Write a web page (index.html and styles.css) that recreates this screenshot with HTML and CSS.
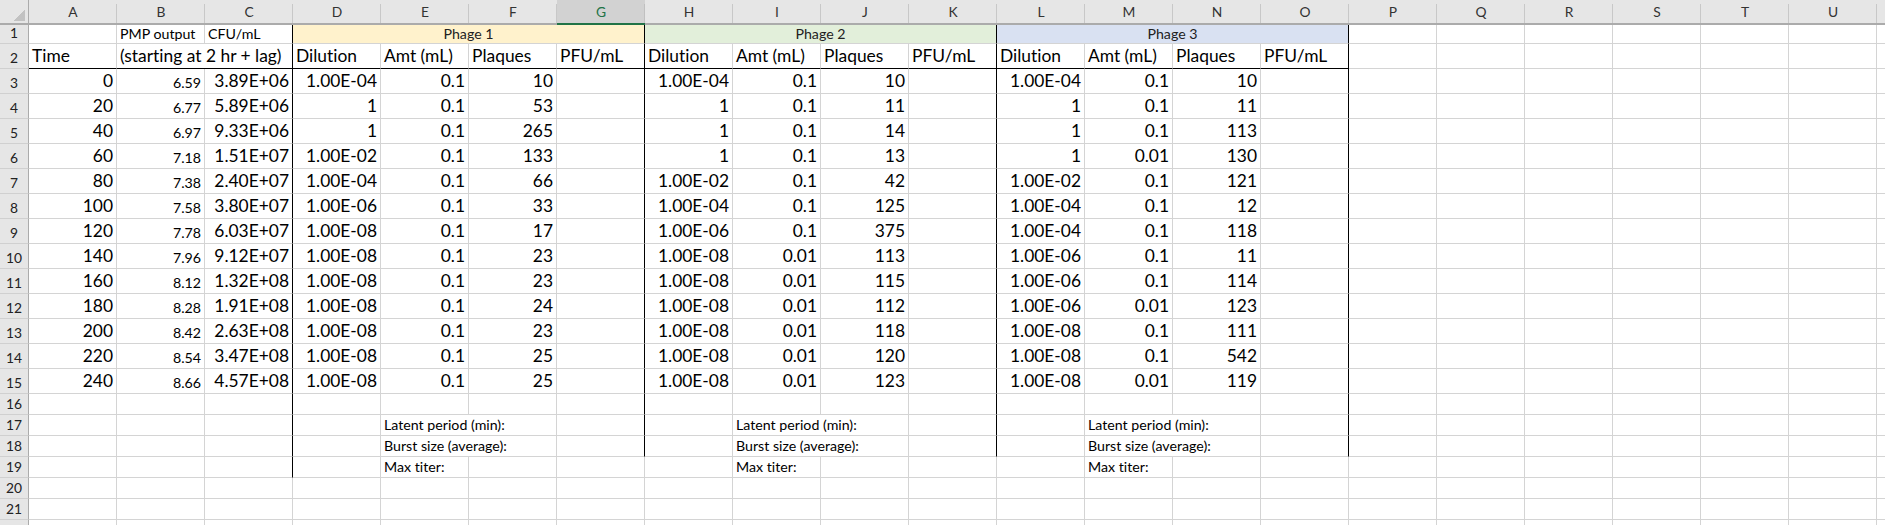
FILE: index.html
```html
<!DOCTYPE html>
<html>
<head>
<meta charset="utf-8">
<title>Phage growth</title>
<link rel="stylesheet" href="styles.css">
</head>
<body>
<table class="sheet">
<colgroup><col class="c-rh"><col span="22" class="c"></colgroup>
<thead>
<tr class="colhead"><th class="corner"></th><th>A</th><th>B</th><th>C</th><th>D</th><th>E</th><th>F</th><th class="sel">G</th><th>H</th><th>I</th><th>J</th><th>K</th><th>L</th><th>M</th><th>N</th><th>O</th><th>P</th><th>Q</th><th>R</th><th>S</th><th>T</th><th>U</th><th></th></tr>
</thead>
<tbody>
<tr class="r19"><th>1</th><td></td><td class="t s">PMP output</td><td class="t s k">CFU/mL</td><td colspan="4" class="phage p1 k">Phage 1</td><td colspan="4" class="phage p2 k">Phage 2</td><td colspan="4" class="phage p3 k">Phage 3</td><td></td><td></td><td></td><td></td><td></td><td></td><td></td></tr>
<tr class="r25 hd"><th>2</th><td class="t hb">Time</td><td colspan="2" class="t hb k">(starting at 2 hr + lag)</td><td class="t hb">Dilution</td><td class="t hb">Amt (mL)</td><td class="t hb">Plaques</td><td class="t hb k">PFU/mL</td><td class="t hb">Dilution</td><td class="t hb">Amt (mL)</td><td class="t hb">Plaques</td><td class="t hb k">PFU/mL</td><td class="t hb">Dilution</td><td class="t hb">Amt (mL)</td><td class="t hb">Plaques</td><td class="t hb k">PFU/mL</td><td></td><td></td><td></td><td></td><td></td><td></td><td></td></tr>
<tr class="r25"><th>3</th><td>0</td><td class="s">6.59</td><td class="k">3.89E+06</td><td>1.00E-04</td><td>0.1</td><td>10</td><td class="k"></td><td>1.00E-04</td><td>0.1</td><td>10</td><td class="k"></td><td>1.00E-04</td><td>0.1</td><td>10</td><td class="k"></td><td></td><td></td><td></td><td></td><td></td><td></td><td></td></tr>
<tr class="r25"><th>4</th><td>20</td><td class="s">6.77</td><td class="k">5.89E+06</td><td>1</td><td>0.1</td><td>53</td><td class="k"></td><td>1</td><td>0.1</td><td>11</td><td class="k"></td><td>1</td><td>0.1</td><td>11</td><td class="k"></td><td></td><td></td><td></td><td></td><td></td><td></td><td></td></tr>
<tr class="r25"><th>5</th><td>40</td><td class="s">6.97</td><td class="k">9.33E+06</td><td>1</td><td>0.1</td><td>265</td><td class="k"></td><td>1</td><td>0.1</td><td>14</td><td class="k"></td><td>1</td><td>0.1</td><td>113</td><td class="k"></td><td></td><td></td><td></td><td></td><td></td><td></td><td></td></tr>
<tr class="r25"><th>6</th><td>60</td><td class="s">7.18</td><td class="k">1.51E+07</td><td>1.00E-02</td><td>0.1</td><td>133</td><td class="k"></td><td>1</td><td>0.1</td><td>13</td><td class="k"></td><td>1</td><td>0.01</td><td>130</td><td class="k"></td><td></td><td></td><td></td><td></td><td></td><td></td><td></td></tr>
<tr class="r25"><th>7</th><td>80</td><td class="s">7.38</td><td class="k">2.40E+07</td><td>1.00E-04</td><td>0.1</td><td>66</td><td class="k"></td><td>1.00E-02</td><td>0.1</td><td>42</td><td class="k"></td><td>1.00E-02</td><td>0.1</td><td>121</td><td class="k"></td><td></td><td></td><td></td><td></td><td></td><td></td><td></td></tr>
<tr class="r25"><th>8</th><td>100</td><td class="s">7.58</td><td class="k">3.80E+07</td><td>1.00E-06</td><td>0.1</td><td>33</td><td class="k"></td><td>1.00E-04</td><td>0.1</td><td>125</td><td class="k"></td><td>1.00E-04</td><td>0.1</td><td>12</td><td class="k"></td><td></td><td></td><td></td><td></td><td></td><td></td><td></td></tr>
<tr class="r25"><th>9</th><td>120</td><td class="s">7.78</td><td class="k">6.03E+07</td><td>1.00E-08</td><td>0.1</td><td>17</td><td class="k"></td><td>1.00E-06</td><td>0.1</td><td>375</td><td class="k"></td><td>1.00E-04</td><td>0.1</td><td>118</td><td class="k"></td><td></td><td></td><td></td><td></td><td></td><td></td><td></td></tr>
<tr class="r25"><th>10</th><td>140</td><td class="s">7.96</td><td class="k">9.12E+07</td><td>1.00E-08</td><td>0.1</td><td>23</td><td class="k"></td><td>1.00E-08</td><td>0.01</td><td>113</td><td class="k"></td><td>1.00E-06</td><td>0.1</td><td>11</td><td class="k"></td><td></td><td></td><td></td><td></td><td></td><td></td><td></td></tr>
<tr class="r25"><th>11</th><td>160</td><td class="s">8.12</td><td class="k">1.32E+08</td><td>1.00E-08</td><td>0.1</td><td>23</td><td class="k"></td><td>1.00E-08</td><td>0.01</td><td>115</td><td class="k"></td><td>1.00E-06</td><td>0.1</td><td>114</td><td class="k"></td><td></td><td></td><td></td><td></td><td></td><td></td><td></td></tr>
<tr class="r25"><th>12</th><td>180</td><td class="s">8.28</td><td class="k">1.91E+08</td><td>1.00E-08</td><td>0.1</td><td>24</td><td class="k"></td><td>1.00E-08</td><td>0.01</td><td>112</td><td class="k"></td><td>1.00E-06</td><td>0.01</td><td>123</td><td class="k"></td><td></td><td></td><td></td><td></td><td></td><td></td><td></td></tr>
<tr class="r25"><th>13</th><td>200</td><td class="s">8.42</td><td class="k">2.63E+08</td><td>1.00E-08</td><td>0.1</td><td>23</td><td class="k"></td><td>1.00E-08</td><td>0.01</td><td>118</td><td class="k"></td><td>1.00E-08</td><td>0.1</td><td>111</td><td class="k"></td><td></td><td></td><td></td><td></td><td></td><td></td><td></td></tr>
<tr class="r25"><th>14</th><td>220</td><td class="s">8.54</td><td class="k">3.47E+08</td><td>1.00E-08</td><td>0.1</td><td>25</td><td class="k"></td><td>1.00E-08</td><td>0.01</td><td>120</td><td class="k"></td><td>1.00E-08</td><td>0.1</td><td>542</td><td class="k"></td><td></td><td></td><td></td><td></td><td></td><td></td><td></td></tr>
<tr class="r25"><th>15</th><td>240</td><td class="s">8.66</td><td class="k">4.57E+08</td><td>1.00E-08</td><td>0.1</td><td>25</td><td class="k"></td><td>1.00E-08</td><td>0.01</td><td>123</td><td class="k"></td><td>1.00E-08</td><td>0.01</td><td>119</td><td class="k"></td><td></td><td></td><td></td><td></td><td></td><td></td><td></td></tr>
<tr class="r21"><th>16</th><td></td><td></td><td class="k"></td><td></td><td></td><td></td><td class="k"></td><td></td><td></td><td></td><td class="k"></td><td></td><td></td><td></td><td class="k"></td><td></td><td></td><td></td><td></td><td></td><td></td><td></td></tr>
<tr class="r21"><th>17</th><td></td><td></td><td class="k"></td><td></td><td colspan="2" class="t s">Latent period (min):</td><td class="k"></td><td></td><td colspan="2" class="t s">Latent period (min):</td><td class="k"></td><td></td><td colspan="2" class="t s">Latent period (min):</td><td class="k"></td><td></td><td></td><td></td><td></td><td></td><td></td><td></td></tr>
<tr class="r21"><th>18</th><td></td><td></td><td class="k"></td><td></td><td colspan="2" class="t s">Burst size (average):</td><td class="k"></td><td></td><td colspan="2" class="t s">Burst size (average):</td><td class="k"></td><td></td><td colspan="2" class="t s">Burst size (average):</td><td class="k"></td><td></td><td></td><td></td><td></td><td></td><td></td><td></td></tr>
<tr class="r21"><th>19</th><td></td><td></td><td class="k"></td><td></td><td class="t s">Max titer:</td><td></td><td></td><td></td><td class="t s">Max titer:</td><td></td><td></td><td></td><td class="t s">Max titer:</td><td></td><td></td><td></td><td></td><td></td><td></td><td></td><td></td><td></td></tr>
<tr class="r21"><th>20</th><td></td><td></td><td></td><td></td><td></td><td></td><td></td><td></td><td></td><td></td><td></td><td></td><td></td><td></td><td></td><td></td><td></td><td></td><td></td><td></td><td></td><td></td></tr>
<tr class="r21"><th>21</th><td></td><td></td><td></td><td></td><td></td><td></td><td></td><td></td><td></td><td></td><td></td><td></td><td></td><td></td><td></td><td></td><td></td><td></td><td></td><td></td><td></td><td></td></tr>
<tr class="r21"><th></th><td></td><td></td><td></td><td></td><td></td><td></td><td></td><td></td><td></td><td></td><td></td><td></td><td></td><td></td><td></td><td></td><td></td><td></td><td></td><td></td><td></td><td></td></tr>
</tbody>
</table>
</body>
</html>
```
FILE: styles.css
```css
html, body {
  margin: 0;
  padding: 0;
  background: #ffffff;
  overflow: hidden;
}
body {
  width: 1885px;
  height: 525px;
}
.sheet {
  border-collapse: separate;
  border-spacing: 0;
  table-layout: fixed;
  width: 1965px;
  font-family: Lato, "Noto Sans", sans-serif;
  font-variant-ligatures: none;
  color: #000;
}
.c-rh { width: 29px; }
.c { width: 88px; }

td, th {
  box-sizing: border-box;
  border: 0;
  padding: 0 3px 2px;
  vertical-align: bottom;
  white-space: nowrap;
  overflow: hidden;
  font-weight: normal;
}

/* column header strip */
.colhead { height: 25px; }
.colhead th {
  background: #e6e6e6 linear-gradient(to left, #c8c8c8 1px, transparent 1px) no-repeat left bottom / 100% 19px;
  border-bottom: 2px solid #ababab;
  font-size: 13.8px;
  line-height: 16px;
  color: #333;
  text-align: center;
  padding: 0 0 3px;
}
.colhead th.sel {
  background: #d2d2d2 linear-gradient(to left, #c0c0c0 1px, transparent 1px) no-repeat left bottom / 100% 19px;
  color: #217346;
  border-bottom-color: #217346;
}
.colhead th.corner {
  background: #e6e6e6 linear-gradient(135deg, transparent 50%, #c2c2c2 50%) no-repeat right 3px bottom 2px / 11px 12px;
  border-right: 1px solid #ababab;
}

/* row headers */
tbody th {
  background: #e6e6e6;
  border-right: 1px solid #ababab;
  border-bottom: 1px solid #d0d0d0;
  font-size: 13.8px;
  line-height: 16px;
  color: #222;
  text-align: center;
  padding: 0 0 2px;
}

/* cells */
td {
  border-right: 1px solid #d4d4d4;
  border-bottom: 1px solid #d4d4d4;
  font-size: 17.4px;
  line-height: 21px;
  text-align: right;
}
td.t { text-align: left; }
td.s { font-size: 14.2px; line-height: 17px; }
td.k { border-right-color: #000; }
td.hb { border-bottom-color: #000; }

.r19 { height: 19px; }
.r25 { height: 25px; }
.r21 { height: 21px; }
.r19 td { padding-bottom: 1px; }
.r21 td.s { padding-bottom: 2px; }

.phage {
  font-size: 14.2px;
  line-height: 17px;
  text-align: center;
  color: #222;
  padding-bottom: 1px;
}
.p1 { background: #fff2cc; }
.p2 { background: #e2efda; }
.p3 { background: #d9e1f2; }
```
